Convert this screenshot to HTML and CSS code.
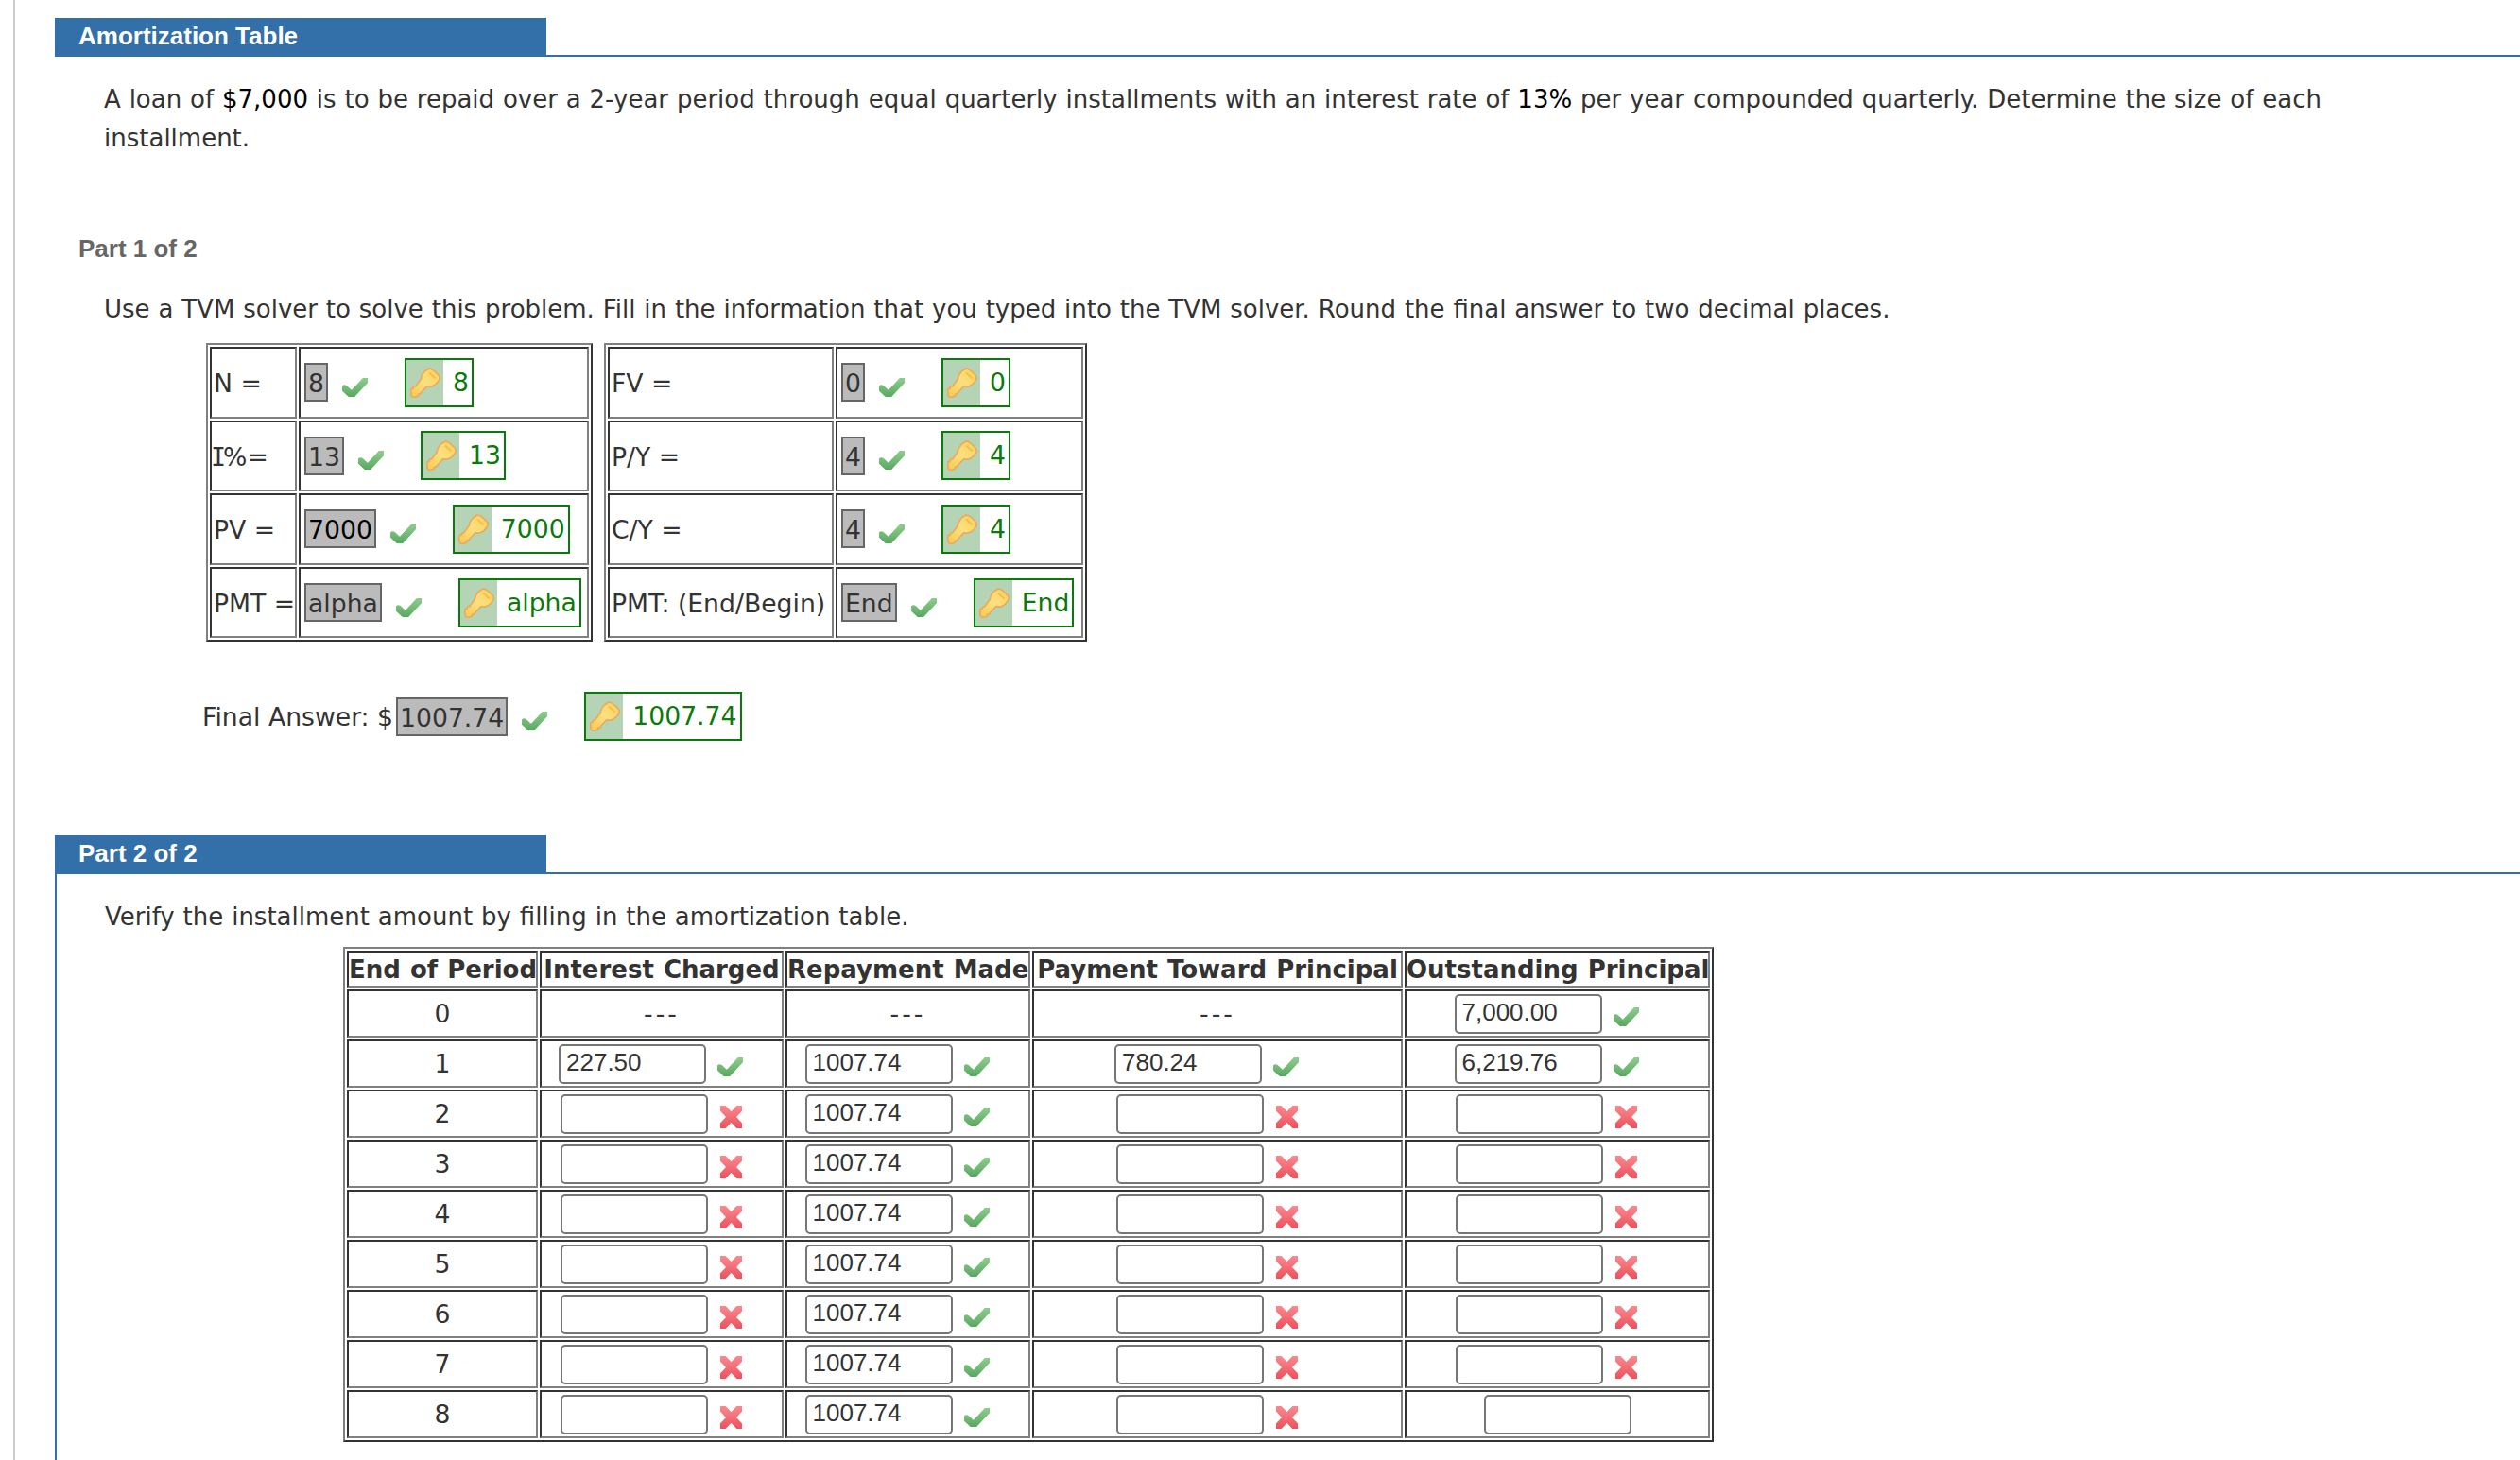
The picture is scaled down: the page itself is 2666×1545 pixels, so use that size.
FILE: index.html
```html
<!DOCTYPE html>
<html lang="en">
<head>
<meta charset="utf-8">
<title>Amortization Table</title>
<link rel="stylesheet" href="styles.css">
</head>
<body>
<svg class="defs" width="0" height="0" aria-hidden="true">
  <defs>
    <linearGradient id="gCheckS" gradientUnits="userSpaceOnUse" x1="0" y1="3" x2="0" y2="23"><stop offset="0" stop-color="#8ccc8a"/><stop offset="1" stop-color="#55a65e"/></linearGradient>
    <linearGradient id="gCross" gradientUnits="userSpaceOnUse" x1="0" y1="2" x2="0" y2="26"><stop offset="0" stop-color="#f98a90"/><stop offset="1" stop-color="#ee505c"/></linearGradient>
    <linearGradient id="gKey" x1="1" y1="0" x2="0" y2="1"><stop offset="0" stop-color="#f8cf58"/><stop offset=".5" stop-color="#fbe080"/><stop offset="1" stop-color="#f6c94e"/></linearGradient>
    <filter id="soft"><feGaussianBlur stdDeviation="0.5"/></filter>
    <symbol id="check" viewBox="0 0 31 25">
      <polyline points="4.5,13 12,20 26.5,4.5" fill="none" stroke="url(#gCheckS)" stroke-width="7.2" stroke-linejoin="round" stroke-linecap="round" filter="url(#soft)"/>
    </symbol>
    <symbol id="cross" viewBox="0 0 27 28">
      <path d="M4.5 4.5 L22.5 23.5 M22.5 4.5 L4.5 23.5" fill="none" stroke="url(#gCross)" stroke-width="8" stroke-linecap="round" filter="url(#soft)"/>
    </symbol>
    <symbol id="key" viewBox="0 0 32 32">
      <path d="M20 1 C22 1 24 2 26 4 L30 8 C32 10 31.5 12 30 14 C28 17 25 19.5 22 20 C20 20.5 19 20 18 19.5 L11 27 L11 28 L8.5 28 L8.5 30 L4.5 31.5 C2 31.5 0.8 29.5 0.8 27 L1 22.5 L3 22.5 L3.5 20 L5.5 20 L11.5 12 C11.5 9 13.5 6 16 3.5 Z" fill="url(#gKey)" stroke="#eca95a" stroke-width="1.6" stroke-linejoin="round"/>
      <path d="M20 5.5 L26.5 11.5" fill="none" stroke="#f3bf4c" stroke-width="1.8"/>
    </symbol>
  </defs>
</svg>
<main class="page">
  <section class="first">
    <header class="banner"><h2 class="tab">Amortization Table</h2></header>
    <p class="prose intro">A loan of <span class="ink">$7,000</span> is to be repaid over a 2-year period through equal quarterly installments with an interest rate of <span class="ink">13%</span> per year compounded quarterly. Determine the size of each installment.</p>
    <h3 class="part">Part 1 of 2</h3>
    <p class="prose solver">Use a TVM solver to solve this problem. Fill in the information that you typed into the TVM solver. Round the final answer to two decimal places.</p>
    <div class="tvm">
      <table class="grid tvm-a">
        <colgroup><col class="a1"><col class="a2"></colgroup>
        <tr><td>N =</td><td><div class="val"><span class="given">8</span><svg class="tick"><use href="#check"/></svg><span class="answer"><span class="keyzone"><svg class="keyicon"><use href="#key"/></svg></span><span class="keyval">8</span></span></div></td></tr>
        <tr><td><span class="serif-i">I</span>%=</td><td><div class="val"><span class="given">13</span><svg class="tick"><use href="#check"/></svg><span class="answer"><span class="keyzone"><svg class="keyicon"><use href="#key"/></svg></span><span class="keyval">13</span></span></div></td></tr>
        <tr><td>PV =</td><td><div class="val"><span class="given ink">7000</span><svg class="tick"><use href="#check"/></svg><span class="answer"><span class="keyzone"><svg class="keyicon"><use href="#key"/></svg></span><span class="keyval">7000</span></span></div></td></tr>
        <tr><td>PMT =</td><td><div class="val"><span class="given">alpha</span><svg class="tick"><use href="#check"/></svg><span class="answer"><span class="keyzone"><svg class="keyicon"><use href="#key"/></svg></span><span class="keyval">alpha</span></span></div></td></tr>
      </table>
      <table class="grid tvm-b">
        <colgroup><col class="b1"><col class="b2"></colgroup>
        <tr><td>FV =</td><td><div class="val"><span class="given">0</span><svg class="tick"><use href="#check"/></svg><span class="answer"><span class="keyzone"><svg class="keyicon"><use href="#key"/></svg></span><span class="keyval">0</span></span></div></td></tr>
        <tr><td>P/Y =</td><td><div class="val"><span class="given">4</span><svg class="tick"><use href="#check"/></svg><span class="answer"><span class="keyzone"><svg class="keyicon"><use href="#key"/></svg></span><span class="keyval">4</span></span></div></td></tr>
        <tr><td>C/Y =</td><td><div class="val"><span class="given">4</span><svg class="tick"><use href="#check"/></svg><span class="answer"><span class="keyzone"><svg class="keyicon"><use href="#key"/></svg></span><span class="keyval">4</span></span></div></td></tr>
        <tr><td>PMT: (End/Begin)</td><td><div class="val"><span class="given">End</span><svg class="tick"><use href="#check"/></svg><span class="answer"><span class="keyzone"><svg class="keyicon"><use href="#key"/></svg></span><span class="keyval">End</span></span></div></td></tr>
      </table>
    </div>
    <div class="final"><span class="final-label">Final Answer: $</span><span class="given">1007.74</span><svg class="tick"><use href="#check"/></svg><span class="answer"><span class="keyzone"><svg class="keyicon"><use href="#key"/></svg></span><span class="keyval">1007.74</span></span></div>
  </section>
  <section class="second">
    <header class="banner"><h2 class="tab">Part 2 of 2</h2></header>
    <div class="second-body">
      <p class="prose verify">Verify the installment amount by filling in the amortization table.</p>
      <table class="grid amort">
        <colgroup><col class="c1"><col class="c2"><col class="c3"><col class="c4"><col class="c5"></colgroup>
        <thead><tr><th>End of Period</th><th>Interest Charged</th><th>Repayment Made</th><th>Payment Toward Principal</th><th>Outstanding Principal</th></tr></thead>
        <tbody>
          <tr><td>0</td><td class="dash">---</td><td class="dash">---</td><td class="dash">---</td><td><div class="entry"><input class="box" type="text" value="7,000.00"><svg class="ok"><use href="#check"/></svg></div></td></tr>
          <tr><td>1</td><td><div class="entry"><input class="box" type="text" value="227.50"><svg class="ok"><use href="#check"/></svg></div></td><td><div class="entry"><input class="box" type="text" value="1007.74"><svg class="ok"><use href="#check"/></svg></div></td><td><div class="entry"><input class="box" type="text" value="780.24"><svg class="ok"><use href="#check"/></svg></div></td><td><div class="entry"><input class="box" type="text" value="6,219.76"><svg class="ok"><use href="#check"/></svg></div></td></tr>
          <tr><td>2</td><td><div class="entry"><input class="box" type="text"><svg class="bad"><use href="#cross"/></svg></div></td><td><div class="entry"><input class="box" type="text" value="1007.74"><svg class="ok"><use href="#check"/></svg></div></td><td><div class="entry"><input class="box" type="text"><svg class="bad"><use href="#cross"/></svg></div></td><td><div class="entry"><input class="box" type="text"><svg class="bad"><use href="#cross"/></svg></div></td></tr>
          <tr><td>3</td><td><div class="entry"><input class="box" type="text"><svg class="bad"><use href="#cross"/></svg></div></td><td><div class="entry"><input class="box" type="text" value="1007.74"><svg class="ok"><use href="#check"/></svg></div></td><td><div class="entry"><input class="box" type="text"><svg class="bad"><use href="#cross"/></svg></div></td><td><div class="entry"><input class="box" type="text"><svg class="bad"><use href="#cross"/></svg></div></td></tr>
          <tr><td>4</td><td><div class="entry"><input class="box" type="text"><svg class="bad"><use href="#cross"/></svg></div></td><td><div class="entry"><input class="box" type="text" value="1007.74"><svg class="ok"><use href="#check"/></svg></div></td><td><div class="entry"><input class="box" type="text"><svg class="bad"><use href="#cross"/></svg></div></td><td><div class="entry"><input class="box" type="text"><svg class="bad"><use href="#cross"/></svg></div></td></tr>
          <tr><td>5</td><td><div class="entry"><input class="box" type="text"><svg class="bad"><use href="#cross"/></svg></div></td><td><div class="entry"><input class="box" type="text" value="1007.74"><svg class="ok"><use href="#check"/></svg></div></td><td><div class="entry"><input class="box" type="text"><svg class="bad"><use href="#cross"/></svg></div></td><td><div class="entry"><input class="box" type="text"><svg class="bad"><use href="#cross"/></svg></div></td></tr>
          <tr><td>6</td><td><div class="entry"><input class="box" type="text"><svg class="bad"><use href="#cross"/></svg></div></td><td><div class="entry"><input class="box" type="text" value="1007.74"><svg class="ok"><use href="#check"/></svg></div></td><td><div class="entry"><input class="box" type="text"><svg class="bad"><use href="#cross"/></svg></div></td><td><div class="entry"><input class="box" type="text"><svg class="bad"><use href="#cross"/></svg></div></td></tr>
          <tr><td>7</td><td><div class="entry"><input class="box" type="text"><svg class="bad"><use href="#cross"/></svg></div></td><td><div class="entry"><input class="box" type="text" value="1007.74"><svg class="ok"><use href="#check"/></svg></div></td><td><div class="entry"><input class="box" type="text"><svg class="bad"><use href="#cross"/></svg></div></td><td><div class="entry"><input class="box" type="text"><svg class="bad"><use href="#cross"/></svg></div></td></tr>
          <tr><td>8</td><td><div class="entry"><input class="box" type="text"><svg class="bad"><use href="#cross"/></svg></div></td><td><div class="entry"><input class="box" type="text" value="1007.74"><svg class="ok"><use href="#check"/></svg></div></td><td><div class="entry"><input class="box" type="text"><svg class="bad"><use href="#cross"/></svg></div></td><td><div class="entry"><input class="box" type="text"></div></td></tr>
        </tbody>
      </table>
    </div>
  </section>
</main>
</body>
</html>
```
FILE: styles.css
```css
* { box-sizing: border-box; }
html, body { margin: 0; padding: 0; background: #fff; }
body { height: 1545px; overflow: hidden; font-family: "DejaVu Sans", Verdana, sans-serif; font-size: 26.67px; color: #333; }
.defs { display: block; width: 0; height: 0; }
.page { margin-left: 14px; border-left: 2px solid #ccc; padding-left: 42px; height: 1545px; }
.first { padding-top: 19px; height: 884px; }
.banner { border-bottom: 2px solid #336fa8; height: 41px; }
.tab { margin: 0; width: 520px; height: 41px; padding: 0 0 3px 25px; background: #336fa8; color: #fff; font: bold 26px/38px "Liberation Sans", Arial, sans-serif; }
.prose { margin: 0; line-height: 41px; font-size: 26px; word-spacing: 0.6px; }
.ink { color: #000; }
.intro { padding: 25px 170px 0 52px; }
.part { margin: 76px 0 0 25px; font: bold 26px/41px "Liberation Sans", Arial, sans-serif; color: #666; }
.solver { margin-top: 23px; padding-left: 52px; }
.tvm { display: flex; gap: 12px; margin: 15px 0 0 160px; }
.grid { border-collapse: separate; border-spacing: 2px; border-style: solid; border-width: 2px; border-color: #808080 #333 #333 #808080; table-layout: fixed; }
.grid td, .grid th { padding: 0 2px; border-style: solid; border-width: 2px; border-color: #333 #808080 #808080 #333; }
.tvm-a { width: 409px; }
.tvm-b { width: 511px; }
.a1 { width: 92px; }
.a2 { width: 307px; }
.b1 { width: 239px; }
.b2 { width: 262px; }
.tvm td { height: 75.6px; padding-top: 2px; white-space: nowrap; }
.serif-i { font-family: "DejaVu Sans Mono", monospace; letter-spacing: -3px; margin-left: -3px; }
.val { display: flex; align-items: center; padding-left: 2px; margin-top: -2px; }
.given { display: inline-block; height: 41px; line-height: 39px; padding: 0 2px; background: #bbb; border: 2px solid #666; white-space: nowrap; }
.tick { width: 31px; height: 25px; margin: 11px 37px 0 13px; flex: none; }
.answer { display: inline-flex; align-items: center; height: 52px; border: 2px solid #0a7a0a; color: #0a7a0a; line-height: 50px; }
.keyzone { display: flex; align-items: center; width: 39px; height: 48px; padding-left: 4px; background: #b5d3b5; }
.keyicon { width: 32px; height: 32px; flex: none; }
.keyval { padding: 0 3px 0 10px; }
.final { display: flex; align-items: center; margin: 53px 0 0 156px; }
.final-label { margin-right: 3px; }
.second-body { border-left: 2px solid #336fa8; height: 620px; }
.verify { padding: 25px 0 0 51px; }
.amort { width: 1450px; margin: 11px 0 0 303px; }
.c1 { width: 202px; }
.c2 { width: 258px; }
.c3 { width: 259px; }
.c4 { width: 392px; }
.c5 { width: 323px; }
.amort th { height: 39px; font-size: 26px; font-weight: bold; word-spacing: 1px; white-space: nowrap; line-height: 33px; padding: 2px 0 0; }
.amort td { height: 51px; text-align: center; padding: 0; }
.amort .dash { letter-spacing: 3px; }
.entry { display: flex; align-items: center; justify-content: center; }
.box { width: 156px; height: 42px; padding: 0 6px 2px; border: 2px solid #767676; border-radius: 5px; background: #fff; color: #333; font: 26px "Liberation Sans", Arial, sans-serif; }
.ok { width: 31px; height: 25px; margin: 8px 21px 0 10px; flex: none; }
.bad { width: 27px; height: 28px; margin: 7px 21px 0 11px; flex: none; }
```
